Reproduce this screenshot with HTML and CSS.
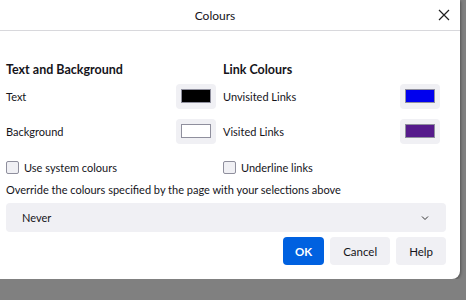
FILE: index.html
```html
<!DOCTYPE html>
<html lang="en">
<head>
    <meta charset="UTF-8">
    <link rel="stylesheet" href="styles.css">
</head>
<body>

    <div class="dialog">
        <div class="titlebar">
            <span class="title">Colours</span>
            <svg class="close" width="12" height="12" viewBox="0 0 12 12">
                <path d="M1 1 L11 11 M11 1 L1 11" stroke="#1f1f1f" stroke-width="1.2" fill="none"/>
            </svg>
        </div>

        <div class="content">
            <div class="columns">
                <!-- Text y fondo -->
                <div class="col">
                    <h2>Text and Background</h2>
                    <div class="row">
                        <span>Text</span>
                        <button class="swatch"><span class="chip" style="background:#000000"></span></button>
                    </div>
                    <div class="row">
                        <span>Background</span>
                        <button class="swatch"><span class="chip" style="background:#ffffff"></span></button>
                    </div>
                    <label class="check"><span class="box"></span>Use system colours</label>
                </div>

                <!-- Enlaces -->
                <div class="col">
                    <h2>Link Colours</h2>
                    <div class="row">
                        <span>Unvisited Links</span>
                        <button class="swatch"><span class="chip" style="background:#0000ee"></span></button>
                    </div>
                    <div class="row">
                        <span>Visited Links</span>
                        <button class="swatch"><span class="chip" style="background:#551a8b"></span></button>
                    </div>
                    <label class="check"><span class="box"></span>Underline links</label>
                </div>
            </div>

            <p class="override">Override the colours specified by the page with your selections above</p>

            <div class="select">
                <span>Never</span>
                <svg width="10" height="10" viewBox="0 0 10 10">
                    <path d="M2 3.5 L5 6.5 L8 3.5" stroke="#333" stroke-width="1" fill="none"/>
                </svg>
            </div>

            <div class="actions">
                <button class="btn primary">OK</button>
                <button class="btn">Cancel</button>
                <button class="btn">Help</button>
            </div>
        </div>
    </div>

</body>
</html>
```

FILE: styles.css
```css
body {
    margin: 0;
    padding: 0;
    background-color: #808080;
    font-family: Lato, "Noto Sans", sans-serif;
    font-size: 11px;
    color: #15141a;
}

.dialog {
    width: 460px;
    height: 279px;
    background-color: white;
    border-bottom-right-radius: 8px;
    box-shadow: 1px 1px 3px rgba(0, 0, 0, 0.35);
}

.titlebar {
    height: 30px;
    border-bottom: 1px solid #d8d8dc;
    display: flex;
    align-items: center;
    justify-content: center;
    position: relative;
}

.title {
    font-size: 12px;
    margin-left: -30px;
}

.close {
    position: absolute;
    right: 10px;
    top: 9px;
}

.content {
    padding: 31px 14px 0 6px;
}

.columns {
    display: grid;
    grid-template-columns: 210px 217px;
    column-gap: 7px;
}

h2 {
    font-size: 12.5px;
    font-weight: bold;
    margin: 0 0 5px 0;
    height: 16px;
    line-height: 16px;
}

.row {
    display: flex;
    justify-content: space-between;
    align-items: center;
    height: 26px;
    margin-bottom: 9px;
}

.swatch {
    width: 40px;
    height: 25px;
    border: none;
    border-radius: 4px;
    background-color: #f0f0f4;
    padding: 0;
    display: flex;
    align-items: center;
    justify-content: center;
}

.chip {
    display: block;
    width: 28px;
    height: 12px;
    border: 1px solid #8f8f9d;
}

.check {
    display: flex;
    align-items: center;
    height: 16px;
    margin-top: 15px;
}

.box {
    width: 11px;
    height: 11px;
    border: 1px solid #8f8f9d;
    border-radius: 2px;
    background-color: #f0f0f4;
    margin: 0 5px 0 0;
}

.override {
    margin: 7px 0 5px 0;
    height: 16px;
    line-height: 16px;
}

.select {
    height: 29px;
    border-radius: 4px;
    background-color: #f0f0f4;
    display: flex;
    align-items: center;
    justify-content: space-between;
    padding: 0 16px;
}

.actions {
    display: flex;
    justify-content: flex-end;
    gap: 6px;
    margin-top: 5px;
}

.btn {
    height: 28px;
    border: none;
    border-radius: 4px;
    background-color: #f0f0f4;
    font-family: inherit;
    font-size: 11.5px;
    color: #15141a;
    padding: 0 13px;
}

.btn.primary {
    background-color: #0061e0;
    color: white;
    font-weight: bold;
    width: 41px;
    padding: 0;
}
```
